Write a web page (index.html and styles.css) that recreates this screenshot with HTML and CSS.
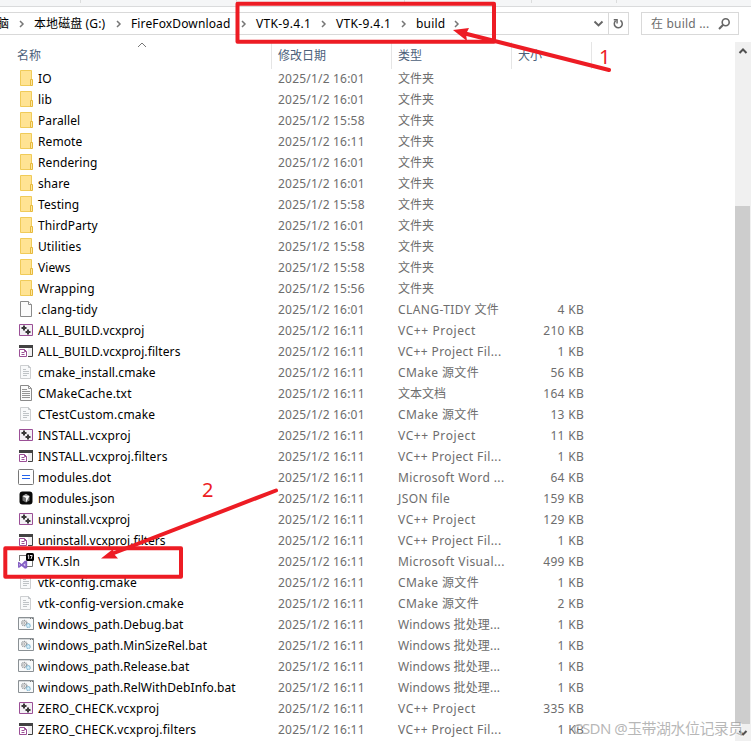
FILE: index.html
```html
<!DOCTYPE html>
<html lang="zh-CN">
<head>
<meta charset="utf-8">
<title>build</title>
<link rel="stylesheet" href="styles.css">
</head>
<body>
<svg width="0" height="0" class="defs" aria-hidden="true">
  <symbol id="folder" viewBox="0 0 16 16"><path d="M2.5.5h11v15h-11z" fill="#ffe393" stroke="#f0cb59"/><path d="M12.5 9.5h2v6h-2z" fill="#ffe89f" stroke="#e6b93d"/></symbol>
  <symbol id="blank" viewBox="0 0 16 16"><path d="M2.5.5h8l3 3v12h-11z" fill="#fbfbfb" stroke="#8a8a8a"/><path d="M10.500.5v3h3" fill="#fff" stroke="#8a8a8a"/></symbol>
  <symbol id="proj" viewBox="0 0 16 16"><path d="M1.500 2.500h13v11h-13z" fill="#f3f0f5" stroke="#9b4f96"/><path d="M6 3.500v5M3.500 6h5M10 7.500v5M7.500 10h5" stroke="#383838" stroke-width="2" fill="none"/></symbol>
  <symbol id="filters" viewBox="0 0 16 16"><path d="M1 2h14v3H1z" fill="#424242"/><path d="M10 5h4v8h-4z" fill="#f0eff1"/><path d="M14.500 4v9.500H10" fill="none" stroke="#424242"/><path d="M1.500 6.500h5l2 2v5h-7z" fill="#fff" stroke="#9b4f96"/><path d="M3.500 9.500h3M3.500 11.500h3M6.500 6.500v2h2" stroke="#9b4f96" fill="none"/></symbol>
  <symbol id="cmake" viewBox="0 0 16 16"><path d="M2.500 1.500h8l2 2v11h-10z" fill="#f8f9fa" stroke="#cdcfd1"/><path d="M10.500 1.500v2h2M5 5.500h3M5 7.500h6M5 9.500h6M5 11.500h4" stroke="#bfc3c6" fill="none"/></symbol>
  <symbol id="txt" viewBox="0 0 16 16"><path d="M2.500.5h8l3 3v12h-11z" fill="#fbfbfb" stroke="#8a8a8a"/><path d="M10.500.5v3h3M4 4.500h5M4 6.500h8M4 8.500h8M4 10.500h8M4 12.500h8" stroke="#969696" fill="none"/></symbol>
  <symbol id="dot" viewBox="0 0 16 16"><rect x=".5" y=".5" width="15" height="15" rx="1" fill="#fff" stroke="#777"/><path d="M4 6.500h8M4 9.500h8" stroke="#2463eb" stroke-width="1.200"/></symbol>
  <symbol id="json" viewBox="0 0 16 16"><rect x="1.500" y="1.500" width="13" height="13" rx="3" fill="#090909"/><path d="M8 4l3.500 2v4.500L8 12.500l-3.500-2V6z" fill="#777"/><path d="M4.500 6h7L8 12.500V8z" fill="#f5f5f5"/><path d="M4.500 6L8 4l3.500 2z" fill="#aaa"/></symbol>
  <symbol id="bat" viewBox="0 0 16 16"><path d="M.5 1.500h15v12H.5z" fill="#f8fafb" stroke="#8a9094"/><path d="M1 2.500h14" stroke="#d5d8da"/><path d="M12 2.500h1M14 2.500h1" stroke="#777"/><circle cx="6.300" cy="7" r="2.500" fill="#e8e8e8" stroke="#8e9295" stroke-width="1.500" stroke-dasharray="1 .6"/><circle cx="6.300" cy="7" r=".8" fill="#999"/><circle cx="10.300" cy="9.500" r="1.900" fill="#d7effa" stroke="#7eb4d0" stroke-width="1.300" stroke-dasharray="1 .5"/></symbol>
  <symbol id="sln" viewBox="0 0 16 16"><path d="M1.500 8V2.500h13v11H9" fill="#fff" stroke="#777"/><path d="M1 2h7v1H1z" fill="#777"/><path d="M.8 8.700L3.600 11 7 7.500l2.200.8v6.700l-2.200.8L3.600 13 .8 15l-.8-.7V9.300z" fill="#8661c5"/><path d="M1.200 10.700v2.300l1-1.200zM7.300 10.200v3.200l-2-1.600z" fill="#d9c9f1"/><rect x="8" y="0" width="8" height="8" rx="1.500" fill="#000"/><path d="M9.700 2.700l1-.6V6M12 2.500h2.200L13 6" fill="none" stroke="#fff" stroke-width=".9"/></symbol>
  <symbol id="chev" viewBox="0 0 6 8"><path d="M1 1l3 3-3 3" fill="none" stroke="#777" stroke-width="1.500"/></symbol>
</svg>

<main class="window">
  <div class="ribbon"><i></i><i></i><i></i><i></i><i></i></div>
  <div class="nav">
    <div class="address">
      <span class="crumb c0">脑</span><svg class="sep"><use href="#chev"/></svg>
      <span class="crumb c1">本地磁盘 (G:)</span><svg class="sep"><use href="#chev"/></svg>
      <span class="crumb c2">FireFoxDownload</span><svg class="sep"><use href="#chev"/></svg>
      <span class="crumb c3">VTK-9.4.1</span><svg class="sep"><use href="#chev"/></svg>
      <span class="crumb c3">VTK-9.4.1</span><svg class="sep"><use href="#chev"/></svg>
      <span class="crumb c4">build</span><svg class="sep"><use href="#chev"/></svg>
      <svg class="drop" viewBox="0 0 20 21"><path d="M6.500 8.500l4 4 4-4" fill="none" stroke="#666" stroke-width="1.900"/></svg>
      <svg class="refresh" viewBox="0 0 20 21"><path d="M12 7.200A4.200 4.200 0 1 1 7 7.600" fill="none" stroke="#666" stroke-width="1.600"/><path d="M5 6.500h3.500v4" fill="none" stroke="#666" stroke-width="1.500"/></svg>
    </div>
    <div class="search"><span>在 build ...</span><svg width="14" height="14" viewBox="0 0 14 14"><circle cx="8.700" cy="5.200" r="3.500" fill="none" stroke="#666" stroke-width="1.600"/><path d="M6.200 7.800L2 12" stroke="#666" stroke-width="2"/></svg></div>
  </div>

  <div class="body">
    <div class="files">
      <div class="head">
        <span class="name">名称<svg class="sort" viewBox="0 0 10 6"><path d="M1 5l4-4 4 4" fill="none" stroke="#777"/></svg></span>
        <span>修改日期</span><span>类型</span><span>大小</span>
      </div>
      <div class="row"><svg><use href="#folder"/></svg><b>IO</b><time>2025/1/2 16:01</time><span class="zh">文件夹</span><em></em></div>
      <div class="row"><svg><use href="#folder"/></svg><b>lib</b><time>2025/1/2 16:01</time><span class="zh">文件夹</span><em></em></div>
      <div class="row"><svg><use href="#folder"/></svg><b>Parallel</b><time>2025/1/2 15:58</time><span class="zh">文件夹</span><em></em></div>
      <div class="row"><svg><use href="#folder"/></svg><b>Remote</b><time>2025/1/2 16:11</time><span class="zh">文件夹</span><em></em></div>
      <div class="row"><svg><use href="#folder"/></svg><b>Rendering</b><time>2025/1/2 16:01</time><span class="zh">文件夹</span><em></em></div>
      <div class="row"><svg><use href="#folder"/></svg><b>share</b><time>2025/1/2 16:01</time><span class="zh">文件夹</span><em></em></div>
      <div class="row"><svg><use href="#folder"/></svg><b>Testing</b><time>2025/1/2 15:58</time><span class="zh">文件夹</span><em></em></div>
      <div class="row"><svg><use href="#folder"/></svg><b>ThirdParty</b><time>2025/1/2 16:01</time><span class="zh">文件夹</span><em></em></div>
      <div class="row"><svg><use href="#folder"/></svg><b>Utilities</b><time>2025/1/2 15:58</time><span class="zh">文件夹</span><em></em></div>
      <div class="row"><svg><use href="#folder"/></svg><b>Views</b><time>2025/1/2 15:58</time><span class="zh">文件夹</span><em></em></div>
      <div class="row"><svg><use href="#folder"/></svg><b class="wide">Wrapping</b><time>2025/1/2 15:56</time><span class="zh">文件夹</span><em></em></div>
      <div class="row"><svg><use href="#blank"/></svg><b>.clang-tidy</b><time>2025/1/2 16:01</time><span>CLANG-TIDY 文件</span><em>4 KB</em></div>
      <div class="row"><svg><use href="#proj"/></svg><b>ALL_BUILD.vcxproj</b><time>2025/1/2 16:11</time><span class="vc">VC++ Project</span><em>210 KB</em></div>
      <div class="row"><svg><use href="#filters"/></svg><b>ALL_BUILD.vcxproj.filters</b><time>2025/1/2 16:11</time><span>VC++ Project Fil...</span><em>1 KB</em></div>
      <div class="row"><svg><use href="#cmake"/></svg><b>cmake_install.cmake</b><time>2025/1/2 16:11</time><span>CMake 源文件</span><em>56 KB</em></div>
      <div class="row"><svg><use href="#txt"/></svg><b class="wide">CMakeCache.txt</b><time>2025/1/2 16:11</time><span class="zh">文本文档</span><em>164 KB</em></div>
      <div class="row"><svg><use href="#cmake"/></svg><b class="wide">CTestCustom.cmake</b><time>2025/1/2 16:01</time><span>CMake 源文件</span><em>13 KB</em></div>
      <div class="row"><svg><use href="#proj"/></svg><b class="wide">INSTALL.vcxproj</b><time>2025/1/2 16:11</time><span class="vc">VC++ Project</span><em>11 KB</em></div>
      <div class="row"><svg><use href="#filters"/></svg><b class="wide">INSTALL.vcxproj.filters</b><time>2025/1/2 16:11</time><span>VC++ Project Fil...</span><em>1 KB</em></div>
      <div class="row"><svg><use href="#dot"/></svg><b class="wide">modules.dot</b><time>2025/1/2 16:11</time><span>Microsoft Word ...</span><em>64 KB</em></div>
      <div class="row"><svg><use href="#json"/></svg><b>modules.json</b><time>2025/1/2 16:11</time><span>JSON file</span><em>159 KB</em></div>
      <div class="row"><svg><use href="#proj"/></svg><b class="snug">uninstall.vcxproj</b><time>2025/1/2 16:11</time><span class="vc">VC++ Project</span><em>129 KB</em></div>
      <div class="row"><svg><use href="#filters"/></svg><b class="snug">uninstall.vcxproj.filters</b><time>2025/1/2 16:11</time><span>VC++ Project Fil...</span><em>1 KB</em></div>
      <div class="row"><svg><use href="#sln"/></svg><b class="wide">VTK.sln</b><time>2025/1/2 16:11</time><span>Microsoft Visual...</span><em>499 KB</em></div>
      <div class="row"><svg><use href="#cmake"/></svg><b class="wide">vtk-config.cmake</b><time>2025/1/2 16:11</time><span>CMake 源文件</span><em>1 KB</em></div>
      <div class="row"><svg><use href="#cmake"/></svg><b class="wide">vtk-config-version.cmake</b><time>2025/1/2 16:11</time><span>CMake 源文件</span><em>2 KB</em></div>
      <div class="row"><svg><use href="#bat"/></svg><b>windows_path.Debug.bat</b><time>2025/1/2 16:11</time><span class="win">Windows 批处理...</span><em>1 KB</em></div>
      <div class="row"><svg><use href="#bat"/></svg><b>windows_path.MinSizeRel.bat</b><time>2025/1/2 16:11</time><span class="win">Windows 批处理...</span><em>1 KB</em></div>
      <div class="row"><svg><use href="#bat"/></svg><b>windows_path.Release.bat</b><time>2025/1/2 16:11</time><span class="win">Windows 批处理...</span><em>1 KB</em></div>
      <div class="row"><svg><use href="#bat"/></svg><b>windows_path.RelWithDebInfo.bat</b><time>2025/1/2 16:11</time><span class="win">Windows 批处理...</span><em>1 KB</em></div>
      <div class="row"><svg><use href="#proj"/></svg><b class="wide">ZERO_CHECK.vcxproj</b><time>2025/1/2 16:11</time><span class="vc">VC++ Project</span><em>335 KB</em></div>
      <div class="row"><svg><use href="#filters"/></svg><b class="wide">ZERO_CHECK.vcxproj.filters</b><time>2025/1/2 16:11</time><span>VC++ Project Fil...</span><em>1 KB</em></div>
    </div>
    <div class="scroll">
      <svg viewBox="0 0 16 17"><path d="M4.500 11l3.500-3.500 3.500 3.500" fill="none" stroke="#505050" stroke-width="2"/></svg>
      <div class="thumb"></div>
      <svg viewBox="0 0 16 17"><path d="M4.500 7l3.500 3.500L11.500 7" fill="none" stroke="#505050" stroke-width="2"/></svg>
    </div>
  </div>

  <svg class="marks" viewBox="0 0 751 741">
    <g fill="none" stroke="#ed1c24" stroke-width="4" stroke-linejoin="round" stroke-linecap="round">
      <rect x="237.500" y="3.700" width="256.500" height="38"/>
      <rect x="5.300" y="548.300" width="175.700" height="28.400"/>
      <path d="M609 70L465 33.500M276 490.500L114 553"/>
    </g>
    <path d="M453 30l16-2-3 6 1 7zM101 558.500l12-9.500 1 5 4 4.500z" fill="#ed1c24"/>
  </svg>
  <span class="num one">1</span>
  <span class="num two">2</span>
  <span class="watermark">CSDN @玉带湖水位记录员</span>
</main>
</body>
</html>
```

FILE: styles.css
```css
* { box-sizing: border-box; }
body { margin: 0; background: #fff; font: 12px/20px "Noto Sans", "Noto Sans CJK SC", sans-serif; color: #000; overflow: hidden; }
.defs { position: absolute; }
.window { position: relative; width: 751px; height: 741px; overflow: hidden; display: flex; flex-direction: column; }
.ribbon { flex: none; height: 7px; background: #f5f6f7; border-bottom: 1px solid #dadbdc; display: grid; grid-template-columns: 81px 156px 168px 127px 85px; }
.ribbon i { height: 3px; border-right: 1px solid #dcdddd; }
.nav { flex: none; height: 35px; padding: 5px 12px 7px 0; display: flex; gap: 12px; }
.address { width: 629px; height: 23px; border: 1px solid #d9d9d9; border-left: 0; display: flex; align-items: center; white-space: nowrap; }
.crumb { flex: none; height: 20px; }
.c0 { width: 10px; margin-right: 9px; text-indent: -3px; }
.c1 { width: 73px; margin: 0 9px 0 9px; letter-spacing: .1px; }
.c2 { width: 101px; margin: 0 9px 0 9px; letter-spacing: .13px; }
.c3 { width: 57px; margin: 0 8px 0 9px; letter-spacing: .35px; }
.c4 { width: 30px; margin: 0 8px 0 9px; letter-spacing: .2px; }
.sep { flex: none; width: 6px; height: 8px; }
.drop { width: 20px; height: 21px; margin-left: auto; }
.refresh { width: 20px; height: 21px; border-left: 1px solid #d9d9d9; }
.search { width: 98px; height: 23px; border: 1px solid #d9d9d9; display: flex; align-items: center; justify-content: space-between; padding: 0 7px 0 9px; color: #6d6d6d; letter-spacing: .2px; }
.body { flex: 1; min-height: 0; display: flex; justify-content: space-between; }
.files { width: 600px; }
.head { height: 26px; display: grid; grid-template-columns: 272px 120px 120px 80px; color: #4c607a; line-height: 27px; }
.head span { position: relative; padding-left: 6px; height: 27px; border-right: 1px solid #e5e5e5; }
.head .name { padding-left: 17px; }
.sort { position: absolute; left: 137px; top: 0; width: 10px; height: 6px; }
.row { height: 21px; padding-left: 18px; display: grid; grid-template-columns: 20px 240px 120px 120px 66px; align-items: center; white-space: nowrap; color: #6d6d6d; }
.row svg { width: 16px; height: 16px; align-self: start; margin-top: 2px; }
.row b { font-weight: 400; color: #000; letter-spacing: .1px; }
.row .wide { letter-spacing: .2px; }
.row .snug { letter-spacing: 0; }
.row time { letter-spacing: .2px; }
.row span { letter-spacing: .4px; }
.row .zh { letter-spacing: 0; }
.row .vc { letter-spacing: .6px; }
.row .win { letter-spacing: .15px; }
.row em { font-style: normal; text-align: right; letter-spacing: .3px; }
.scroll { width: 16px; background: #f0f0f0; display: flex; flex-direction: column; justify-content: space-between; }
.scroll svg { width: 16px; height: 17px; }
.thumb { width: 15px; height: 518px; margin-top: auto; background: #cdcdcd; }
.marks { position: absolute; inset: 0; width: 751px; height: 741px; }
.num { position: absolute; color: #ed1c24; font-size: 20px; line-height: 24px; }
.one { left: 599px; top: 45px; }
.two { left: 202px; top: 478px; }
.watermark { position: absolute; left: 573px; top: 717px; font-size: 15px; line-height: 22px; letter-spacing: -.55px; color: rgba(160,160,160,.75); text-shadow: 1px 1px 0 rgba(255,255,255,.7); white-space: nowrap; }
```
